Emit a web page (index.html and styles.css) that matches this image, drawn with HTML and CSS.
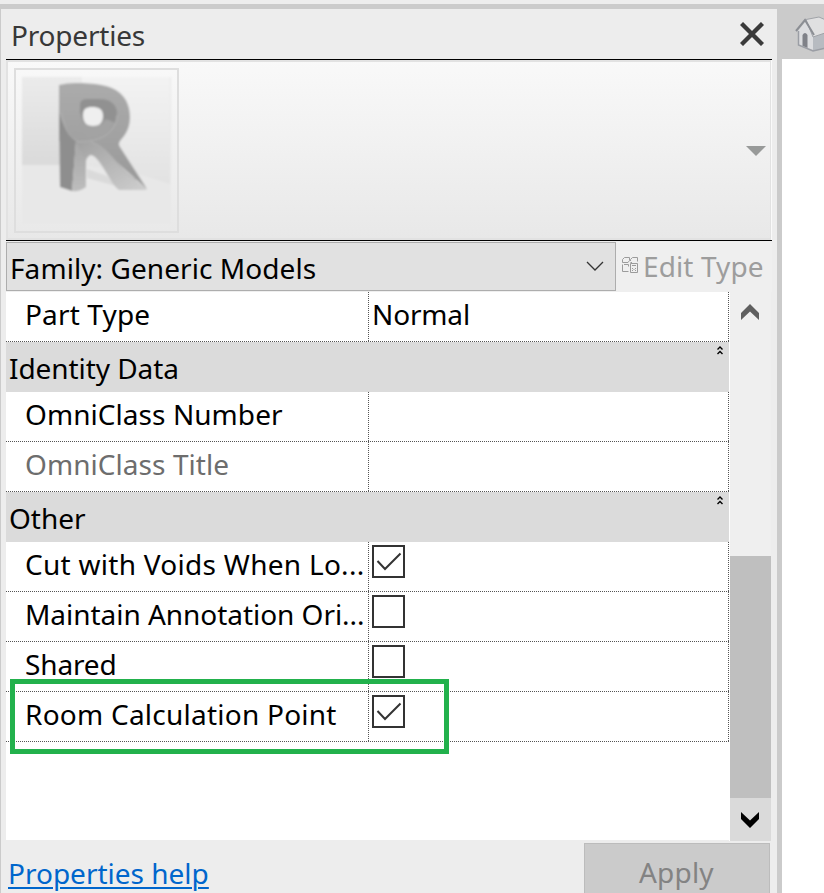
FILE: index.html
```html
<!DOCTYPE html>
<html lang="en">
<head>
<meta charset="utf-8">
<title>Properties</title>
<link rel="stylesheet" href="styles.css">
</head>
<body>
<div class="top-strip"></div>
<div class="workspace">
  <section class="panel">
    <header class="panel-header">
      <h1 class="title">Properties</h1>
      <svg class="close" width="24" height="24" viewBox="0 0 24 24"><path d="M1.500 1.500L22.500 22.500M22.500 1.500L1.500 22.500"/></svg>
    </header>
    <div class="type-selector">
      <div class="thumb">
        <svg width="161" height="161" viewBox="16 70 161 161">
          <defs>
            <linearGradient id="wall" x1="0" y1="0" x2="0" y2="1"><stop offset="0" stop-color="#ebebeb"/><stop offset="1" stop-color="#dadada"/></linearGradient>
            <linearGradient id="side" x1="0" y1="0" x2="0" y2="1"><stop offset="0" stop-color="#f3f3f3"/><stop offset="1" stop-color="#e2e2e2"/></linearGradient>
            <linearGradient id="leg" x1="0" y1="0" x2="1" y2="1"><stop offset="0" stop-color="#a0a0a0"/><stop offset="1" stop-color="#cfcfcf"/></linearGradient>
            <linearGradient id="stem" x1="0" y1="0" x2="0" y2="1"><stop offset="0" stop-color="#a5a5a5"/><stop offset="1" stop-color="#bdbdbd"/></linearGradient>
            <linearGradient id="face" x1="0" y1="0" x2="0" y2="1"><stop offset="0" stop-color="#ababab"/><stop offset="1" stop-color="#999"/></linearGradient>
            <filter id="soft" x="-5%" y="-5%" width="110%" height="110%"><feGaussianBlur stdDeviation=".8"/></filter>
          </defs>
          <g filter="url(#soft)">
            <path fill="#e8e8e8" d="M22 77h149v147H22z"/>
            <path fill="url(#wall)" d="M22 77h60v88H22z"/>
            <path fill="url(#side)" d="M82 77h88v107l-38-12-50-7z"/>
            <path fill="#dadada" d="M87 169l20 7 9 10-29-8z"/>
            <path fill="url(#face)" d="M59 85q8-2 16-2c20 0 36 2 45 10 7 6 10 15 10 24 0 13-6 19-10 24q-2 3 0 6l27 42-43-38-13-9-15-1-17 0z"/>
            <path fill="#8e8e8e" d="M59 112q4 17 17 29l-4 50-12-4z"/>
            <path fill="url(#stem)" d="M76 141h14v14l-4 4v28q-6 5-14 4z"/>
            <path fill="url(#leg)" d="M76 141q8 0 15 1c10 3 17 10 24 18 9 10 19 19 32 29l-1 1h-27c-5-3-10-13-15-21-5-8-9-14-14-14q-3 0-4 6z"/>
            <path fill="#919191" d="M80 122v-18q1-5 7-5h12c12 0 18 6 18 15 0 7-3 12-9 15z"/>
            <path fill="#a3a3a3" d="M80 112l4 12h18q2-6 7-4l6 3q-10 13-28 15l-7-12z"/>
            <path fill="#efefef" d="M83 115c0-6 3-8 9-8 7 0 11 2 11 9s-4 10-10 10q-10 0-10-11z"/>
            <path fill="none" stroke="#b3b3b3" stroke-width="1" d="M61 112c3 16 8 26 18 30 23-1 37-9 38-27M91 142c18 5 24 25 45 38"/>
          </g>
        </svg>
      </div>
      <svg class="drop" width="20" height="10" viewBox="0 0 20 10"><path d="M0 0h20L10 10z"/></svg>
    </div>
    <div class="family-row">
      <div class="family"><span class="t-family">Family: Generic Models</span>
        <svg width="18" height="11" viewBox="0 0 18 11"><path d="M1 1l8 8 8-8"/></svg>
      </div>
      <div class="edit-type">
        <svg width="17" height="17" viewBox="0 0 17 17"><path d="M.5 5.500V2.500L2.500 .500H7.500V3.500L6 5.500zM8.500 4V2.500l2-2h5V4.500M8.500 5.500H10M.5 7.500v7h6M2 7.500h4.500v2M8.500 6.500h7v9h-7zM10 8.500h4M10 11.500h1M13 11.500h1M11.500 12.500h1M10 13.500h1M13 13.500h1"/></svg>
        <span class="t-edit">Edit Type</span>
      </div>
    </div>
    <div class="body">
      <div class="grid">
        <div class="row"><div class="name"><span class="t-part">Part Type</span></div><div class="value"><span class="t-normal">Normal</span></div></div>
        <div class="group"><span class="t-identity">Identity Data</span><svg width="6" height="9" viewBox="0 0 6 9"><path d="M.5 3.500L3 1l2.500 2.500M.5 8L3 5.500 5.500 8"/></svg></div>
        <div class="row"><div class="name"><span class="t-number">OmniClass Number</span></div><div class="value"></div></div>
        <div class="row muted"><div class="name"><span class="t-number">OmniClass Title</span></div><div class="value"></div></div>
        <div class="group"><span class="t-other">Other</span><svg width="6" height="9" viewBox="0 0 6 9"><path d="M.5 3.500L3 1l2.500 2.500M.5 8L3 5.500 5.500 8"/></svg></div>
        <div class="row"><div class="name"><span class="t-cut">Cut with Voids When Lo...</span></div><div class="value"><i class="check"><svg width="29" height="29" viewBox="0 0 29 29"><path d="M3.500 14l7.500 8L26.500 6.500"/></svg></i></div></div>
        <div class="row"><div class="name"><span class="t-maintain">Maintain Annotation Ori...</span></div><div class="value"><i class="check"></i></div></div>
        <div class="row"><div class="name"><span class="t-shared">Shared</span></div><div class="value"><i class="check"></i></div></div>
        <div class="row"><div class="name"><span class="t-room">Room Calculation Point</span></div><div class="value"><i class="check"><svg width="29" height="29" viewBox="0 0 29 29"><path d="M3.500 14l7.500 8L26.500 6.500"/></svg></i></div><div class="highlight"></div></div>
      </div>
      <div class="scrollbar">
        <div class="track"><svg width="18" height="16" viewBox="0 0 18 16"><path d="M9 0l9 9v7L9 7.500 0 16V9z"/></svg></div>
        <div class="scroll-thumb"></div>
        <div class="scroll-down"><svg width="18" height="16" viewBox="0 0 18 16"><path d="M9 16l9-9V0L9 8.500 0 0v7z"/></svg></div>
      </div>
    </div>
    <footer class="footer">
      <a class="help">Properties help</a>
      <div class="apply">Apply</div>
    </footer>
  </section>
  <main class="view">
    <div class="tab">
      <svg width="29" height="38" viewBox="795 15 29 38">
        <defs><filter id="haze"><feGaussianBlur stdDeviation=".6"/></filter></defs>
        <g filter="url(#haze)">
          <path fill="#dcdde0" d="M798 31l8-10 8 12v17l-16-5z"/>
          <path fill="#b7bbc1" d="M813 37l14-5v16l-14 3z"/>
          <path fill="#e0e0e1" stroke="#a0a3a8" d="M806 19.500l13-2.500 9 4v11l-15 5z"/>
          <path fill="none" stroke="#8b8e94" stroke-width="2" d="M796 31l9-11 9 15"/>
          <path fill="#7f8188" d="M802.500 46V35q2.500-4 5 0v13z"/>
          <path fill="none" stroke="#9b9ea5" stroke-width="1.500" d="M798.500 31v14l14.500 6 13-3"/>
        </g>
      </svg>
    </div>
  </main>
</div>
</body>
</html>
```

FILE: styles.css
```css
* { box-sizing: border-box; }
body { margin: 0; width: 824px; height: 893px; overflow: hidden; background: #ededed; font: 28px/38px "Noto Sans", sans-serif; color: #000; }
svg { display: block; flex: none; }
span { white-space: nowrap; }
.top-strip { height: 4px; margin-left: 1px; }
.workspace { display: flex; height: 889px; border-top: 5px solid #cbcbcb; border-left: 1px solid #cbcbcb; }
.panel { width: 776px; flex: none; padding: 0 5px; background: #ededed; display: flex; flex-direction: column; }
.panel-header { height: 51px; flex: none; border-bottom: 1px solid #000; display: flex; justify-content: space-between; padding: 7px 8.5px 0 5px; }
.title { font: inherit; color: #383838; margin: 0; white-space: nowrap; letter-spacing: -.2px; }
.close { margin-top: 5.5px; fill: none; stroke: #3a3a3a; stroke-width: 4.300; }
.type-selector { height: 181px; flex: none; border-bottom: 1px solid #000; background: linear-gradient(#f9f9f9, #e8e8e8); box-shadow: inset -1px 0 #fafafa, inset 0 0 0 2px #e2e2e2; display: flex; justify-content: space-between; padding: 8px 6px 0 8px; }
.thumb { width: 165px; height: 165px; border: 2px solid #dedede; }
.drop { margin-top: 78px; fill: #989a99; }
.family-row { height: 51px; flex: none; display: flex; padding-top: 1px; background: #efefef; }
.family { width: 610px; height: 49px; border: 1px solid #adadad; background: #e1e1e1; display: flex; justify-content: space-between; padding: 6px 11px 0 3px; }
.family svg { margin-top: 12px; fill: none; stroke: #333; stroke-width: 1.300; }
.edit-type { display: flex; color: #9d9d9d; padding: 5px 0 0 6px; }
.edit-type svg { margin-top: 10px; margin-right: 4px; fill: none; stroke: #9b9b9b; }
.body { display: flex; height: 549px; flex: none; }
.grid { width: 723px; height: 548px; background: #fff; }
.row { display: flex; height: 50px; border-bottom: 1px dotted #555; position: relative; }
.name { width: 363px; border-right: 1px dotted #555; padding: 3px 0 0 19px; }
.value { flex: 1; border-right: 1px dotted #555; padding: 3px 0 0 3px; }
.muted { color: #6d6d6d; }
.group { height: 50px; background: #dbdbdb; display: flex; justify-content: space-between; padding: 7px 6.5px 0 3px; }
.group svg { margin-top: -3px; fill: none; stroke: #000; stroke-width: 1.400; }
.t-family { letter-spacing: .07px; }
.t-edit { letter-spacing: .1px; }
.t-part { letter-spacing: .15px; }
.t-normal { letter-spacing: -.15px; }
.t-identity { letter-spacing: -.07px; }
.t-number { letter-spacing: .06px; }
.t-cut { letter-spacing: .28px; }
.t-maintain { letter-spacing: -.04px; }
.t-shared { letter-spacing: -.15px; }
.t-room { letter-spacing: .24px; }
.check { display: block; width: 33px; height: 33px; border: 2px solid #333; }
.check svg { fill: none; stroke: #333; stroke-width: 2; }
.highlight { position: absolute; left: 4px; top: -13px; width: 439px; height: 75px; border: 5px solid #22b14c; }
.scrollbar { width: 42px; border-left: 1px solid #fff; background: #efefef; display: flex; flex-direction: column; }
.track { height: 264px; padding: 12px 0 0 11px; fill: #5f5f5f; }
.scroll-thumb { height: 242px; background: #bfbfbf; }
.scroll-down { height: 43px; background: #dadada; padding: 14px 0 0 11px; }
.footer { flex: 1; display: flex; justify-content: space-between; padding: 2px 2px 0; }
.help { color: #0066cc; padding-top: 11px; text-decoration: underline; text-decoration-thickness: 2px; text-underline-offset: 3px; }
.apply { width: 186px; height: 60px; border: 1px solid #bcbcbc; background: #cbcbcb; color: #838383; padding: 9px 0 0 54px; letter-spacing: .2px; }
.view { flex: 1; border-left: 5px solid #cbcbcb; background: #fff; }
.tab { height: 50px; background: #cbcbcb; padding: 6px 0 0 13px; }
```
